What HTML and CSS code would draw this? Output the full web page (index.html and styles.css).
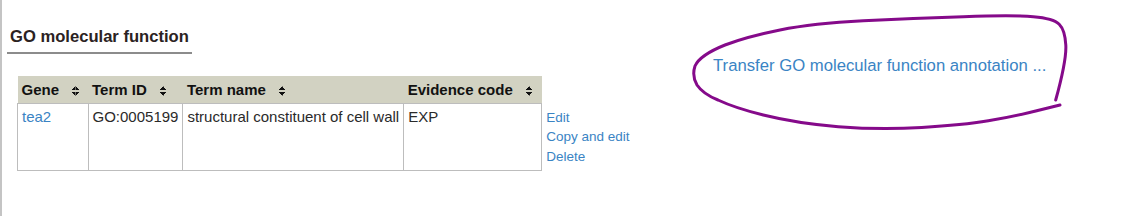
FILE: index.html
```html
<!DOCTYPE html>
<html lang="en">
<head>
    <meta charset="UTF-8">
    <title>GO molecular function</title>
    <link rel="stylesheet" href="styles.css">
</head>
<body>

    <div class="page">
        <div class="annotation">
            <h3 class="section-title">GO molecular function</h3>
            <table class="annot-table">
                <thead>
                    <tr>
                        <th>Gene<span class="sort"></span></th>
                        <th>Term ID<span class="sort"></span></th>
                        <th>Term name<span class="sort"></span></th>
                        <th>Evidence code<span class="sort"></span></th>
                    </tr>
                </thead>
                <tbody>
                    <tr>
                        <td class="cell"><a href="#">tea2</a></td>
                        <td class="cell">GO:0005199</td>
                        <td class="cell">structural constituent of cell wall</td>
                        <td class="cell">EXP</td>
                        <td class="actions">
                            <a href="#">Edit</a><br>
                            <a href="#">Copy and edit</a><br>
                            <a href="#">Delete</a>
                        </td>
                    </tr>
                </tbody>
            </table>
        </div>

        <div class="transfer">
            <a href="#">Transfer GO molecular function annotation ...</a>
        </div>

        <!-- hand-drawn circle around the transfer link -->
        <svg class="scribble" width="1123" height="216" viewBox="0 0 1123 216">
            <path d="M1055.7 100 Q1066.7 60 1065.8 45 Q1065 30 1059.2 24.2 Q1053.3 18.3 1033.3 16.7 Q1013.3 15 963.3 16.7 Q913.3 18.3 863.3 20.8 Q813.3 23.3 780 30 Q746.7 36.7 725 45 Q700 55 695 66 Q691.7 76 697 85 Q703 94 718 100 Q735 108 763.3 115 Q796.7 123.3 838.3 126.7 Q880 130 921.7 127.5 Q963.3 125 988.3 120.8 Q1013.3 116.7 1036.7 110.8 L1060 105"
                  fill="none" stroke="#850a8a" stroke-width="3" stroke-linecap="round" stroke-linejoin="round"/>
        </svg>
    </div>

</body>
</html>
```

FILE: styles.css
```css
body {
    margin: 0;
    background: #fff;
    font-family: "Liberation Sans", Arial, sans-serif;
    color: #222;
}

a {
    color: #3a84c4;
    text-decoration: none;
}

.page {
    position: relative;
    display: flex;
    height: 216px;
    box-sizing: border-box;
    border-left: 2px solid #c4c4c4;
}

.annotation {
    width: 690px;
    padding-top: 28px;
    padding-left: 5px;
}

.section-title {
    display: inline-block;
    margin: 0;
    padding: 0 3px 6px 3px;
    font-size: 16.6px;
    line-height: 18px;
    font-weight: bold;
    color: #2b2222;
    border-bottom: 2px solid #8c8c8c;
}

.annot-table {
    margin-top: 22px;
    margin-left: 10px;
    border-collapse: collapse;
    font-size: 15px;
}

.annot-table th {
    background: #d2d2c2;
    color: #111;
    text-align: left;
    font-weight: bold;
    line-height: 17px;
    padding: 5px 9px 5px 4px;
    white-space: nowrap;
}

.sort {
    display: inline-block;
    width: 7px;
    height: 10px;
    margin-left: 13px;
    vertical-align: -1px;
    background:
        linear-gradient(to top right, transparent 50%, #111 50%) left bottom / 50% 4px no-repeat,
        linear-gradient(to top left, transparent 50%, #111 50%) right bottom / 50% 4px no-repeat,
        linear-gradient(to bottom right, transparent 50%, #111 50%) left top / 50% 4px no-repeat,
        linear-gradient(to bottom left, transparent 50%, #111 50%) right top / 50% 4px no-repeat;
}

.annot-table td.cell {
    border: 1px solid #bdbdbd;
    padding: 4px 4px;
    vertical-align: top;
    line-height: 18px;
    color: #2a2a2a;
    white-space: nowrap;
}

.annot-table td.actions {
    padding: 4px 4px 4px 4px;
    font-size: 13.5px;
    line-height: 19.5px;
    vertical-align: top;
    white-space: nowrap;
}

.transfer {
    padding-top: 56px;
    padding-left: 16px;
    font-size: 16.7px;
}

.scribble {
    position: absolute;
    top: 0;
    left: -2px;
    pointer-events: none;
}
```
